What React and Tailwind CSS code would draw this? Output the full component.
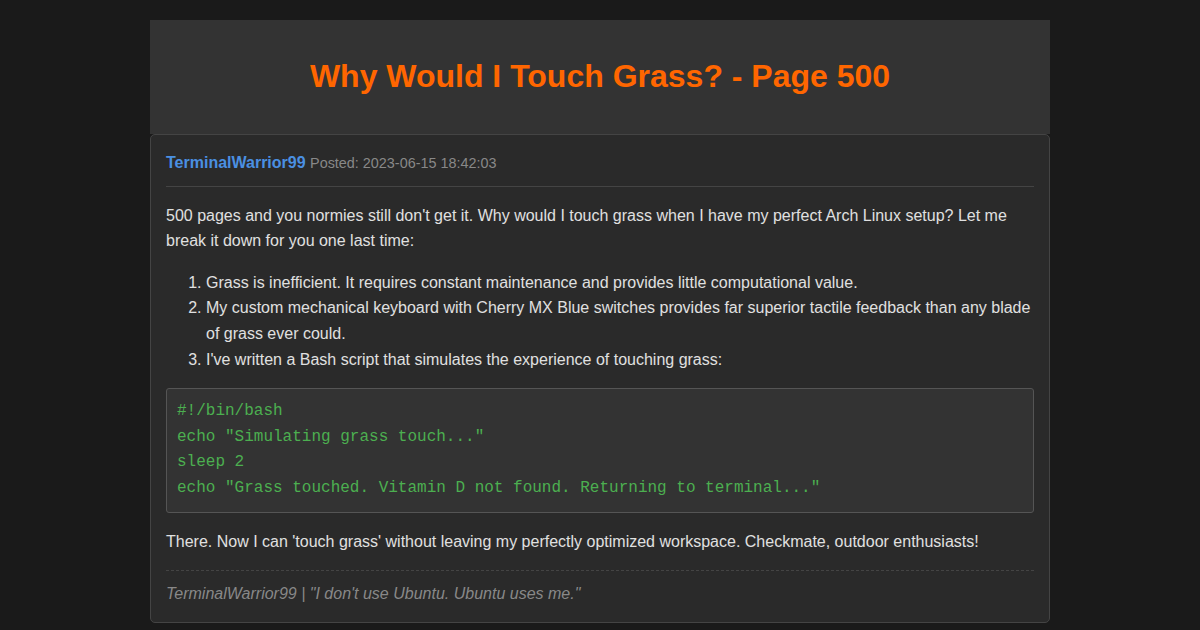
export default function App() {
  return (
    <div className="min-h-[630px] bg-[#1a1a1a] text-[#e0e0e0] leading-[1.6] font-['Liberation_Sans',Arial,sans-serif]">
      <div className="w-[900px] mx-auto pt-[20px]">
        <div className="bg-[#333333] py-[10px] text-center">
          <h1 className="my-[21.44px] text-[32px] leading-[51.2px] font-bold text-[#ff6600]">
            Why Would I Touch Grass? - Page 500
          </h1>
        </div>
        <div className="bg-[#2a2a2a] border border-[#444444] rounded-[5px] p-[15px]">
          <div className="border-b border-[#444444] pb-[10px]">
            <span className="font-bold text-[#4a90e2]">TerminalWarrior99</span>{" "}
            <span className="text-[14.4px] text-[#888888]">Posted: 2023-06-15 18:42:03</span>
          </div>
          <p className="mt-[16px] text-[16px]">
            500 pages and you normies still don't get it. Why would I touch grass when I have my perfect Arch Linux setup? Let me break it down for you one last time:
          </p>
          <ol className="mt-[16px] pl-[40px] list-decimal">
            <li>Grass is inefficient. It requires constant maintenance and provides little computational value.</li>
            <li>My custom mechanical keyboard with Cherry MX Blue switches provides far superior tactile feedback than any blade of grass ever could.</li>
            <li>I've written a Bash script that simulates the experience of touching grass:</li>
          </ol>
          <pre className="mt-[16px] bg-[#333333] border border-[#555555] rounded-[3px] p-[10px] text-[16px] leading-[25.6px] text-[#4caf50] font-['Liberation_Mono','Courier_New',monospace]">
{`#!/bin/bash
echo "Simulating grass touch..."
sleep 2
echo "Grass touched. Vitamin D not found. Returning to terminal..."`}
          </pre>
          <p className="mt-[16px]">
            There. Now I can 'touch grass' without leaving my perfectly optimized workspace. Checkmate, outdoor enthusiasts!
          </p>
          <div className="mt-[16px] border-t border-dashed border-[#444444] pt-[10px] italic text-[#888888]">
            TerminalWarrior99 | "I don't use Ubuntu. Ubuntu uses me."
          </div>
        </div>
      </div>
    </div>
  );
}
